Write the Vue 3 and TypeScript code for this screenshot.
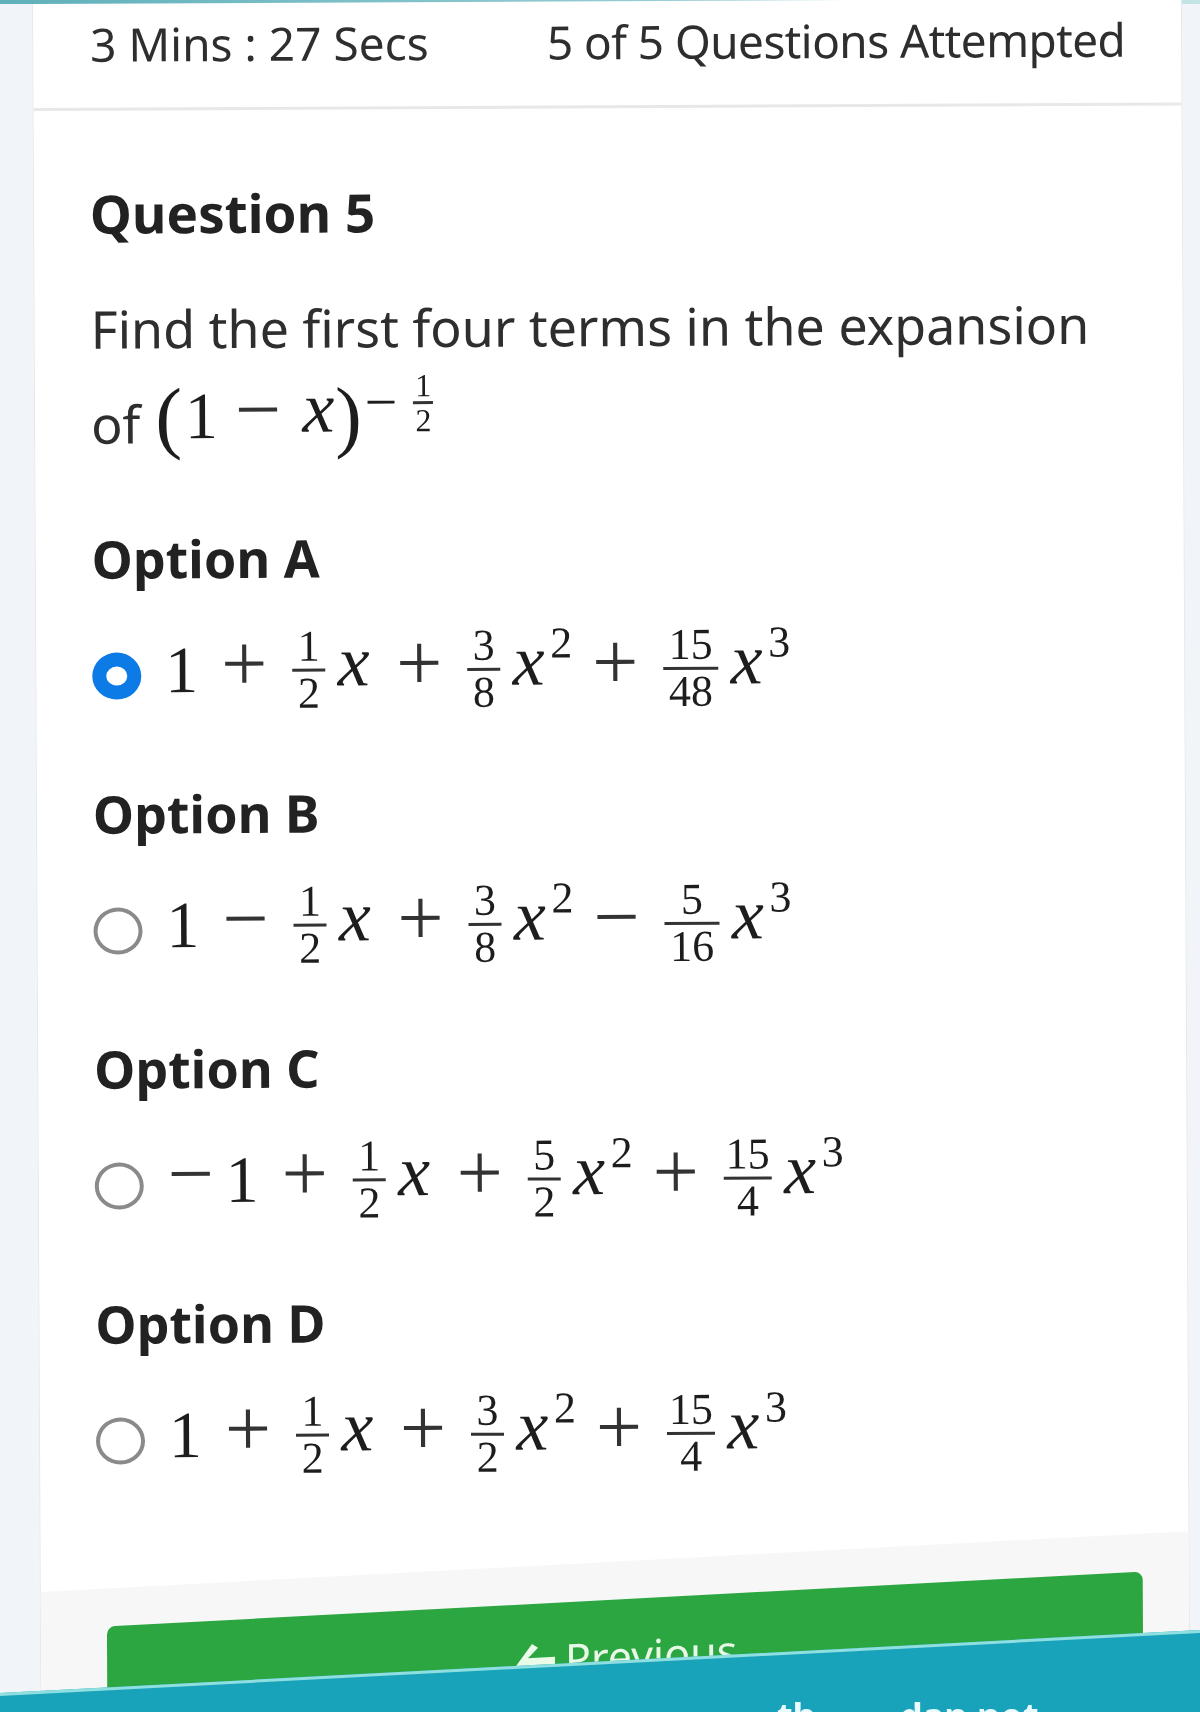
<script setup lang="ts">
type Tok =
  | { k: 'n'; v: string }
  | { k: 'o'; v: string }
  | { k: 'f'; a: string; b: string; w: number }
  | { k: 'x' }
  | { k: 's'; v: string }

interface Opt { label: string; on: boolean; toks: Tok[] }

const n = (v: string): Tok => ({ k: 'n', v })
const o = (v: string): Tok => ({ k: 'o', v })
const f = (a: string, b: string, w = 33): Tok => ({ k: 'f', a, b, w })
const x: Tok = { k: 'x' }
const s = (v: string): Tok => ({ k: 's', v })

const options: Opt[] = [
  { label: 'Option A', on: true, toks: [n('1'), o('+'), f('1', '2'), x, o('+'), f('3', '8'), x, s('2'), o('+'), f('15', '48', 55), x, s('3')] },
  { label: 'Option B', on: false, toks: [n('1'), o('−'), f('1', '2'), x, o('+'), f('3', '8'), x, s('2'), o('−'), f('5', '16', 55), x, s('3')] },
  { label: 'Option C', on: false, toks: [o('−'), n('1'), o('+'), f('1', '2'), x, o('+'), f('5', '2'), x, s('2'), o('+'), f('15', '4', 48), x, s('3')] },
  { label: 'Option D', on: false, toks: [n('1'), o('+'), f('1', '2'), x, o('+'), f('3', '2'), x, s('2'), o('+'), f('15', '4', 48), x, s('3')] },
]
</script>

<template>
  <div class="page">
    <div class="strip"></div>
    <main class="card">
      <header class="top">
        <span class="timer">3 Mins : 27 Secs</span>
        <span>5 of 5 Questions Attempted</span>
      </header>
      <section class="body">
        <h2 class="qhead">Question 5</h2>
        <p class="qline">Find the first four terms in the expansion</p>
        <p class="qline second">
          <span>of</span>
          <span class="math inlinemath">
            <span class="paren">(</span>
            <span class="num one">1</span>
            <span class="op">−</span>
            <i class="vx">x</i>
            <span class="paren">)</span>
            <span class="expminus">−</span>
            <span class="tiny"><span>1</span><b></b><span>2</span></span>
          </span>
        </p>
        <div v-for="opt in options" :key="opt.label" class="opt">
          <h3 class="olabel">{{ opt.label }}</h3>
          <div class="orow">
            <span class="radio" :class="{ on: opt.on }"></span>
            <span class="math rowmath">
              <template v-for="(t, i) in opt.toks" :key="i">
                <span v-if="t.k === 'n'" class="num">{{ t.v }}</span>
                <span v-else-if="t.k === 'o'" class="op">{{ t.v }}</span>
                <i v-else-if="t.k === 'x'" class="vx">x</i>
                <span v-else-if="t.k === 's'" class="sup">{{ t.v }}</span>
                <span v-else class="frac" :style="{ width: t.w + 'px' }">
                  <span>{{ t.a }}</span><b></b><span>{{ t.b }}</span>
                </span>
              </template>
            </span>
          </div>
        </div>
      </section>
      <footer class="foot">
        <div class="btn">
          <svg class="back" viewBox="0 0 42 30" width="42" height="30" aria-hidden="true">
            <path d="M0 28 L19 3 L25 7 L15 17 L42 17 L42 30 L0 30 Z" fill="#eafbe8" />
          </svg>
          <span>Previous</span>
        </div>
      </footer>
    </main>
    <div class="teal">
      <span class="tealtext"><span>th</span><span>dan not</span></span>
    </div>
  </div>
</template>

<style>
html, body { margin: 0; background: #fff; }
</style>

<style scoped>
.page {
  position: relative;
  width: 1200px;
  height: 1712px;
  overflow: hidden;
  background: #f1f4f8;
  font-family: "Noto Sans", sans-serif;
  color: #2e2e2e;
  filter: blur(0.7px);
}
.strip {
  height: 4px;
  background: linear-gradient(90deg, #5fb0bb, #c4e4e6);
}
.card {
  margin: 0 18px 0 32px;
  height: 1720px;
  background: #fff;
  border-left: 1px solid #e6e8ea;
  border-right: 1px solid #e6e8ea;
  transform: rotate(-0.28deg);
  transform-origin: 0 0;
}
.top {
  display: flex;
  justify-content: space-between;
  height: 94px;
  padding: 10px 56px 0 57px;
  border-bottom: 3px solid #e8e8e8;
  font-size: 46px;
  line-height: 60px;
  letter-spacing: -0.6px;
}
.timer { letter-spacing: 0; }
.body { padding: 70px 0 0 56px; }
.qhead {
  margin: 0;
  font-size: 53px;
  line-height: 66px;
  font-weight: 700;
  color: #222;
}
.qline {
  margin: 49px 0 0;
  font-size: 52px;
  line-height: 66px;
}
.qline.second {
  margin: 22px 0 0;
  padding-bottom: 19px;
  display: flex;
  align-items: baseline;
  gap: 15px;
}
.math {
  display: inline-flex;
  align-items: center;
  height: 66px;
  font-family: "Liberation Serif", serif;
  color: #1d1d1d;
}
.rowmath { margin-bottom: 10px; }
.paren { font-size: 80px; line-height: 66px; }
.num { font-size: 66px; line-height: 66px; width: 30px; text-align: center; }
.one { margin-left: 3px; width: 26px; }
.op {
  font-size: 82px;
  line-height: 66px;
  width: 46px;
  text-align: center;
  margin: 0 25px 12px 26px;
  color: #333;
}
.op:first-child { margin-left: 0; margin-right: 12px; }
.sup + .op { margin-left: 20px; }
.vx {
  font-size: 72px;
  line-height: 66px;
  font-style: italic;
  width: 33px;
  text-align: center;
  margin: 0 0 16px 12px;
}
.inlinemath .op { margin: 0 16px 12px 24px; }
.inlinemath .vx { margin-left: 5px; }
.expminus { font-size: 58px; line-height: 30px; margin: 0 16px 26px 3px; }
.tiny {
  display: inline-flex;
  flex-direction: column;
  align-items: center;
  width: 20px;
  font-size: 32px;
  line-height: 28px;
  margin-bottom: 26px;
}
.tiny b { width: 20px; height: 3px; background: #333; margin: 2px 0; }
.olabel {
  margin: 50px 0 0;
  font-size: 52px;
  line-height: 66px;
  font-weight: 700;
  color: #222;
}
.orow {
  display: flex;
  align-items: center;
  gap: 24px;
  height: 110px;
  margin-top: 29px;
}
.radio {
  width: 49px;
  height: 47px;
  box-sizing: border-box;
  border: 4px solid #8a8a8a;
  border-radius: 50%;
  flex: none;
}
.radio.on { border: 14px solid #0d7be6; }
.frac {
  display: inline-flex;
  flex-direction: column;
  align-items: center;
  font-size: 44px;
  line-height: 42px;
}
.frac b { width: 100%; height: 3px; background: #333; margin: 1px 0; flex: none; }
.sup {
  font-size: 44px;
  line-height: 44px;
  margin: 0 0 50px 5px;
}
.foot {
  margin-top: 96px;
  padding: 38px 46px 60px 66px;
  background: #f7f7f7;
  transform: skewY(-2.75deg);
  transform-origin: 0 0;
}
.btn {
  display: flex;
  justify-content: center;
  align-items: flex-start;
  gap: 10px;
  height: 130px;
  padding-top: 27px;
  border-radius: 8px 8px 0 0;
  background: #2ba640;
  color: #e8f8e6;
  font-size: 43px;
  line-height: 60px;
}
.back { flex: none; margin-top: 10px; }
.teal {
  position: absolute;
  left: -20px;
  right: -20px;
  top: 1694px;
  height: 120px;
  background: #19a3bb;
  border-top: 3px solid #8fdfe0;
  transform: skewY(-3deg);
  transform-origin: 0 0;
}
.tealtext {
  position: absolute;
  left: 797px;
  top: 33px;
  display: flex;
  gap: 84px;
  color: #eafcff;
  font-size: 36px;
  line-height: 56px;
  font-weight: 700;
  transform: skewY(3deg);
  transform-origin: 0 0;
  white-space: nowrap;
}
</style>
